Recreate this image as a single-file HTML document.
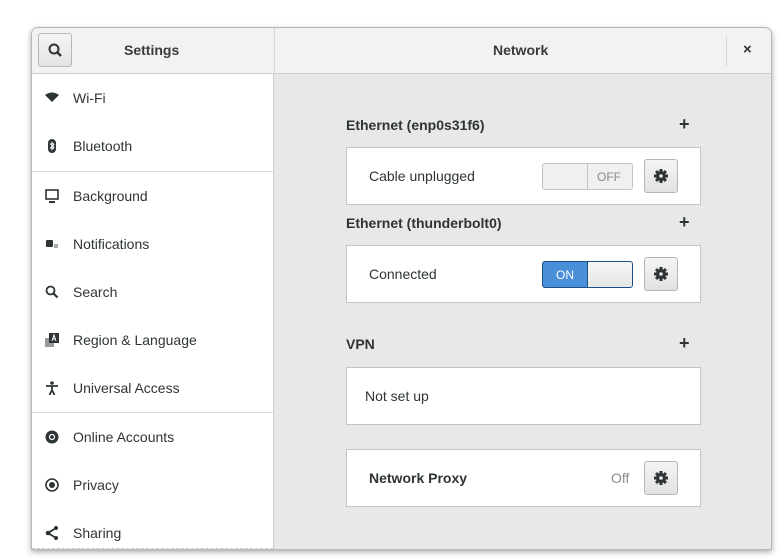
<!DOCTYPE html>
<html><head><style>
*{margin:0;padding:0;box-sizing:border-box}
body{width:781px;height:559px;background:#fff;font-family:"Liberation Sans","DejaVu Sans",sans-serif;color:#2e3436;position:relative;overflow:hidden}
.win{position:absolute;left:31px;top:27px;width:741px;height:523px;border:1px solid #b8b8b6;border-radius:7px 7px 0 0;overflow:hidden;box-shadow:0 2px 6px rgba(0,0,0,.35);background:#e8e8e7}
.hdr{position:absolute;left:0;top:0;width:741px;height:46px;background:#f2f2f2;border-bottom:1px solid #cfcfcd}
.sb{position:absolute;left:0;top:46px;width:242px;height:477px;background:#fff;border-right:1px solid #cfcfcd}
.item{position:absolute;left:0;width:241px;height:48px;font-size:14px;line-height:48px;padding-left:41px}
.ic{position:absolute;left:13px;top:17px;width:14px;height:14px}
.sep{position:absolute;left:0;width:241px;height:1px;background:#dcdcdb}
.t{position:absolute;font-size:14px}
.box{position:absolute;left:314px;width:355px;background:#fff;border:1px solid #c4c4c2}
.gear{position:absolute;width:34px;height:34px;border:1px solid #b6b6b3;border-radius:3px;background:linear-gradient(#f4f4f3,#e2e2e0)}
.plus{position:absolute;left:647px;font-size:18px;font-weight:bold}
</style></head><body>
<div class="win">
<div class="hdr">
 <div style="position:absolute;left:6px;top:5px;width:34px;height:34px;border:1px solid #b6b6b3;border-radius:3px;background:linear-gradient(#f4f4f3,#e4e4e2)">
  <svg width="32" height="32" viewBox="0 0 32 32"><circle cx="15" cy="15" r="4.5" fill="none" stroke="#2e3436" stroke-width="2"/><path d="M18 18l4 4" stroke="#2e3436" stroke-width="2.5"/></svg></div>
 <div class="t" style="left:92px;top:14px;font-weight:bold;color:#3a3a3a">Settings</div>
 <div style="position:absolute;left:242px;top:0;width:1px;height:46px;background:#d6d6d4"></div>
 <div class="t" style="left:461px;top:14px;font-weight:bold;color:#3a3a3a">Network</div>
 <div style="position:absolute;left:694px;top:8px;width:1px;height:30px;background:#d6d6d4"></div>
 <div class="t" style="left:711px;top:13px;font-weight:bold;font-size:15px">×</div>
</div>
<div class="sb">
 <div class="item" style="top:0"><svg class="ic" viewBox="0 0 14 14"><path d="M0 4Q7-1 14 4L7 11Z" fill="#2e3436"/></svg>Wi-Fi</div>
 <div class="item" style="top:48px"><svg class="ic" viewBox="0 0 14 14"><rect x="3" y="0" width="8" height="14" rx="4" fill="#2e3436"/><path d="M5 4.5l4 4-2 2V3.5l2 2-4 4" stroke="#fff" fill="none" stroke-width="1"/></svg>Bluetooth</div>
 <div class="sep" style="top:97px"></div>
 <div class="item" style="top:98px"><svg class="ic" viewBox="0 0 14 14"><rect x="1" y="1" width="12" height="9" fill="none" stroke="#2e3436" stroke-width="1.6"/><rect x="4" y="12" width="6" height="2" fill="#2e3436"/></svg>Background</div>
 <div class="item" style="top:146px"><svg class="ic" viewBox="0 0 14 14"><rect x="1" y="3" width="7" height="7" rx="1" fill="#2e3436"/><rect x="9" y="7" width="4" height="4" fill="#aaa"/></svg>Notifications</div>
 <div class="item" style="top:194px"><svg class="ic" viewBox="0 0 14 14"><circle cx="5.5" cy="5.5" r="4" fill="none" stroke="#2e3436" stroke-width="1.8"/><path d="M8.5 8.5l4 4" stroke="#2e3436" stroke-width="2.2"/></svg>Search</div>
 <div class="item" style="top:242px"><svg class="ic" viewBox="0 0 14 14"><rect x="0" y="5" width="9" height="9" fill="#999"/><rect x="4" y="0" width="10" height="10" fill="#2e3436"/><path d="M7 8l2-6 2 6M8 6h2" stroke="#fff" fill="none"/></svg>Region &amp; Language</div>
 <div class="item" style="top:290px"><svg class="ic" viewBox="0 0 14 14"><circle cx="7" cy="2" r="1.8" fill="#2e3436"/><path d="M1 5h12M7 5v4M4.5 14l2.5-5 2.5 5" stroke="#2e3436" stroke-width="1.8" fill="none"/></svg>Universal Access</div>
 <div class="sep" style="top:338px"></div>
 <div class="item" style="top:339px"><svg class="ic" viewBox="0 0 14 14"><circle cx="7" cy="7" r="6.5" fill="#2e3436"/><circle cx="7" cy="7" r="2.5" fill="none" stroke="#fff" stroke-width="1.2"/></svg>Online Accounts</div>
 <div class="item" style="top:387px"><svg class="ic" viewBox="0 0 14 14"><circle cx="7" cy="7" r="6" fill="none" stroke="#2e3436" stroke-width="1.6"/><circle cx="7" cy="7" r="3" fill="#2e3436"/></svg>Privacy</div>
 <div class="item" style="top:435px"><svg class="ic" viewBox="0 0 14 14"><path d="M11 2L3 7l8 5" stroke="#2e3436" stroke-width="1.8" fill="none"/><circle cx="11" cy="2" r="2" fill="#2e3436"/><circle cx="3" cy="7" r="2.3" fill="#2e3436"/><circle cx="11" cy="12" r="2" fill="#2e3436"/></svg>Sharing</div>
 <div style="position:absolute;left:0;top:474px;width:241px;border-top:1px dashed #ccc"></div>
</div>
<div class="t" style="left:314px;top:89px;font-weight:bold">Ethernet (enp0s31f6)</div>
<div class="plus" style="top:86px">+</div>
<div class="box" style="top:119px;height:58px">
 <div class="t" style="left:22px;top:20px">Cable unplugged</div>
 <div style="position:absolute;left:195px;top:15px;width:91px;height:27px;border:1px solid #c4c4c2;border-radius:3px;background:#f0f0ef"><div style="position:absolute;left:44px;top:0;width:1px;height:25px;background:#c4c4c2"></div><div style="position:absolute;left:54px;top:6px;font-size:12px;color:#8a8a8a">OFF</div></div>
 <div class="gear" style="left:297px;top:11px"><svg width="32" height="32" viewBox="0 0 32 32"><g fill="#2e3436"><circle cx="16" cy="16" r="5"/><path d="M14.5 9h3v14h-3zM9 14.5h14v3H9z"/><path d="M14.5 9h3v14h-3zM9 14.5h14v3H9z" transform="rotate(45 16 16)"/></g><circle cx="16" cy="16" r="1.8" fill="#e8e8e6"/></svg></div>
</div>
<div class="t" style="left:314px;top:187px;font-weight:bold">Ethernet (thunderbolt0)</div>
<div class="plus" style="top:184px">+</div>
<div class="box" style="top:217px;height:58px">
 <div class="t" style="left:22px;top:20px">Connected</div>
 <div style="position:absolute;left:195px;top:15px;width:91px;height:27px;border:1px solid #1c4f85;border-radius:3px;background:#4a90d9"><div style="position:absolute;left:44px;top:0;width:45px;height:25px;background:linear-gradient(#f6f6f5,#e6e6e4);border-left:1px solid #1c4f85;border-radius:0 2px 2px 0"></div><div style="position:absolute;left:13px;top:6px;font-size:12px;color:#fff">ON</div></div>
 <div class="gear" style="left:297px;top:11px"><svg width="32" height="32" viewBox="0 0 32 32"><g fill="#2e3436"><circle cx="16" cy="16" r="5"/><path d="M14.5 9h3v14h-3zM9 14.5h14v3H9z"/><path d="M14.5 9h3v14h-3zM9 14.5h14v3H9z" transform="rotate(45 16 16)"/></g><circle cx="16" cy="16" r="1.8" fill="#e8e8e6"/></svg></div>
</div>
<div class="t" style="left:314px;top:308px;font-weight:bold">VPN</div>
<div class="plus" style="top:305px">+</div>
<div class="box" style="top:339px;height:58px"><div class="t" style="left:18px;top:20px">Not set up</div></div>
<div class="box" style="top:421px;height:58px">
 <div class="t" style="left:22px;top:20px;font-weight:bold">Network Proxy</div>
 <div class="t" style="left:264px;top:20px;color:#8a8a8a">Off</div>
 <div class="gear" style="left:297px;top:11px"><svg width="32" height="32" viewBox="0 0 32 32"><g fill="#2e3436"><circle cx="16" cy="16" r="5"/><path d="M14.5 9h3v14h-3zM9 14.5h14v3H9z"/><path d="M14.5 9h3v14h-3zM9 14.5h14v3H9z" transform="rotate(45 16 16)"/></g><circle cx="16" cy="16" r="1.8" fill="#e8e8e6"/></svg></div>
</div>
</div>
</body></html>
